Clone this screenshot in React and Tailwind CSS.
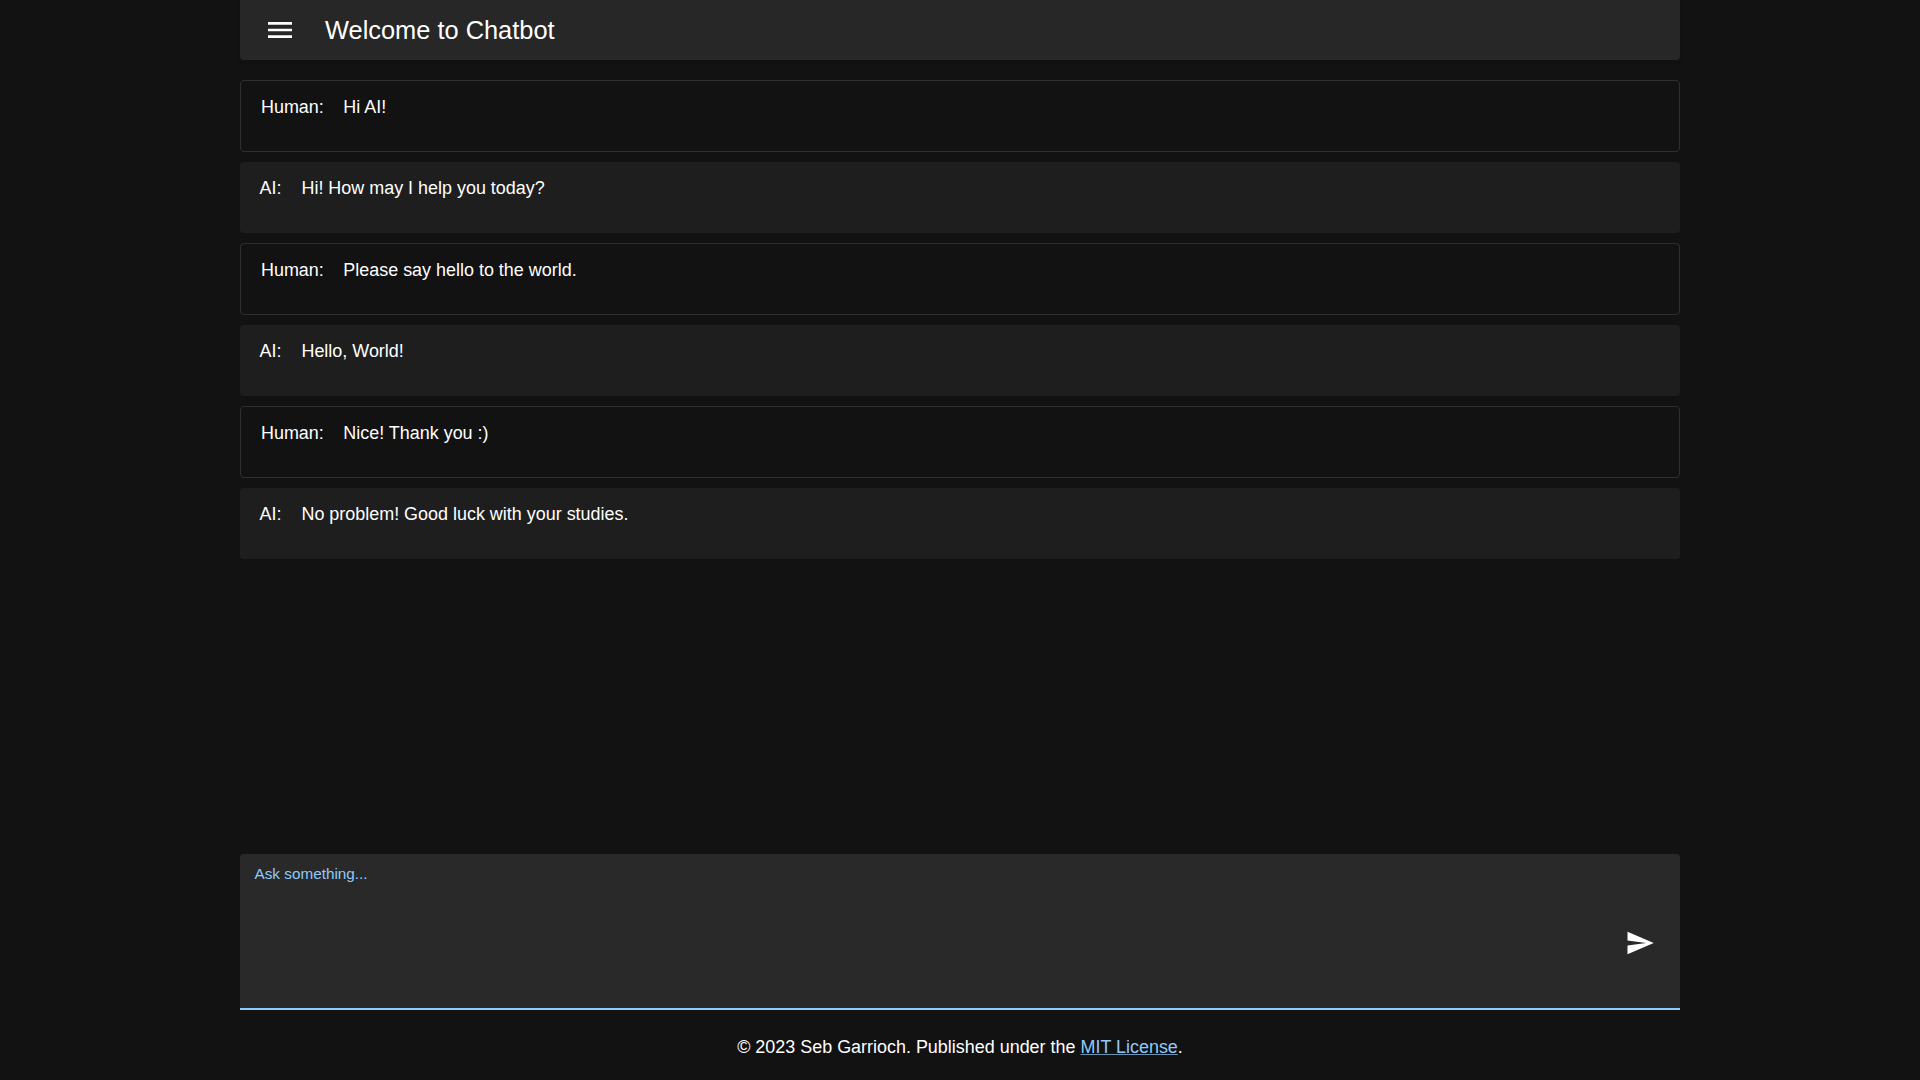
const F = "font-['Liberation_Sans',Arial,sans-serif]";
const msgs = [
  ["Human", "Hi AI!"],
  ["AI", "Hi! How may I help you today?"],
  ["Human", "Please say hello to the world."],
  ["AI", "Hello, World!"],
  ["Human", "Nice! Thank you :)"],
  ["AI", "No problem! Good luck with your studies."],
];

function Msg({ who, text }) {
  const human = who === "Human";
  return (
    <div
      className={
        human
          ? "h-[72px] rounded border border-[#2f2f2f] pl-[20px] pt-[13.5px] flex gap-[19.5px] text-[17.95px] leading-[24px] text-white"
          : "h-[71px] rounded bg-[#1e1e1e] pl-[19.5px] pt-[13.5px] flex gap-[20px] text-[17.95px] leading-[24px] text-white"
      }
    >
      <span>{who}:</span>
      <span>{text}</span>
    </div>
  );
}

export default function App() {
  return (
    <div className={`${F} h-screen bg-[#121212] flex justify-center`}>
      <div className="w-[1440px] h-full flex flex-col">
        <header className="h-[60px] shrink-0 bg-[#272727] rounded-b flex items-center pl-[24px] gap-[29px] shadow-[0_2px_4px_-1px_rgba(0,0,0,0.2)]">
          <svg width="32" height="32" viewBox="0 0 24 24" fill="#fff">
            <path d="M3 18h18v-2H3v2zm0-5h18v-2H3v2zm0-7v2h18V6H3z" />
          </svg>
          <h1 className="text-[25.4px] leading-[32px] text-white font-normal">Welcome to Chatbot</h1>
        </header>
        <main className="flex-1 flex flex-col gap-[10px] pt-[20px]">
          {msgs.map(([w, t], i) => (
            <Msg key={i} who={w} text={t} />
          ))}
        </main>
        <div className="h-[156px] shrink-0 bg-[#292929] rounded-t border-b-2 border-[#90caf9] flex items-center justify-between pl-[14.5px] pr-[25px] relative">
          <span className="absolute left-[14.5px] top-[10px] text-[15.3px] leading-[20px] text-[#90caf9]">Ask something...</span>
          <span />
          <svg className="mt-[24px]" width="30" height="30" viewBox="0 0 24 24" fill="#fff">
            <path d="M2.01 21 23 12 2.01 3 2 10l15 2-15 2z" />
          </svg>
        </div>
        <footer className="h-[70px] shrink-0 pt-[4px] flex items-center justify-center text-[17.95px] text-white">
          <span>
            © 2023 Seb Garrioch. Published under the{" "}
            <a className="text-[#90caf9] underline decoration-[#90caf9]/70" href="#">MIT License</a>.
          </span>
        </footer>
      </div>
    </div>
  );
}
